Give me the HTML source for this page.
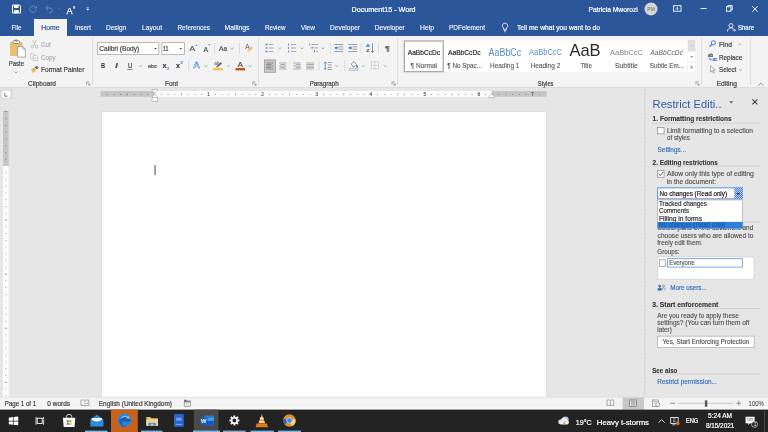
<!DOCTYPE html>
<html><head><meta charset="utf-8"><title>Document15 - Word</title>
<style>
html,body{margin:0;padding:0;}
body{width:768px;height:432px;overflow:hidden;background:#e6e6e6;}
svg#app{position:absolute;left:0;top:0;display:block;will-change:transform;}
svg text{font-family:"Liberation Sans",sans-serif;white-space:pre;}
</style></head><body>
<svg id="app" width="768" height="432" viewBox="0 0 768 432">
<rect x="0.00" y="0.00" width="768.00" height="36.00" fill="#2b579a" />
<rect x="0.00" y="36.00" width="768.00" height="51.00" fill="#f3f3f3" />
<rect x="0.00" y="87.00" width="768.00" height="1.00" fill="#dcdcdc" />
<rect x="34.00" y="19.00" width="33.00" height="18.00" fill="#f3f3f3" />
<text x="351.50" y="11.80" font-size="6.70" fill="#fff" textLength="64.00" lengthAdjust="spacingAndGlyphs" stroke="#fff" stroke-width="0.2">Document15 - Word</text>
<text x="588.50" y="11.70" font-size="6.70" fill="#fff" textLength="49.30" lengthAdjust="spacingAndGlyphs" stroke="#fff" stroke-width="0.2">Patricia Mworozi</text>
<circle cx="651" cy="9" r="6.5" fill="#d6d6d6"/>
<text x="647.30" y="11.07" font-size="4.94" fill="#8a8a8a" textLength="7.50" lengthAdjust="spacingAndGlyphs" stroke="#8a8a8a" stroke-width="0.2">PM</text>
<svg x="12.00" y="4.50" width="9" height="9" viewBox="0 0 9 9" overflow="visible"><path d="M0.5 0.5h7l1 1v7h-8z" fill="none" stroke="#fff" stroke-width="1"/><rect x="2" y="0.5" width="4.5" height="3" fill="#fff"/><rect x="2.2" y="5.6" width="4.6" height="3" fill="#fff"/></svg>
<svg x="29.00" y="5.00" width="8" height="8" viewBox="0 0 8 8" overflow="visible"><path d="M6.8 2.6A3.2 3.2 0 1 0 7.2 4.6" fill="none" stroke="#6f8fc0" stroke-width="0.9"/><path d="M7.4 0.8v2.2h-2.2" fill="none" stroke="#6f8fc0" stroke-width="0.9"/></svg>
<svg x="45.00" y="5.00" width="9" height="8" viewBox="0 0 9 8" overflow="visible"><path d="M3 0.8L0.8 3l2.2 2.2M0.8 3h4.2a2.3 2.3 0 0 1 0 4.6h-1" fill="none" stroke="#6f8fc0" stroke-width="0.9"/></svg>
<svg x="57.50" y="8.00" width="3" height="2" viewBox="0 0 3 2" overflow="visible"><path d="M0.3 0.3L1.3 1.4L2.3 0.3" fill="none" stroke="#6f8fc0" stroke-width="0.6"/></svg>
<text x="66.50" y="13.67" font-size="9.40" fill="#fff" textLength="6.10" lengthAdjust="spacingAndGlyphs" stroke="#fff" stroke-width="0.25">A</text>
<text x="73.00" y="8.53" font-size="4.27" fill="#dfe7f3" textLength="2.30" lengthAdjust="spacingAndGlyphs" stroke="#dfe7f3" stroke-width="0.2">§</text>
<svg x="86.00" y="7.50" width="4" height="4" viewBox="0 0 4 4" overflow="visible"><path d="M0.4 0.4h2.6" stroke="#fff" stroke-width="0.7"/><path d="M0.3 1.6L1.7 3l1.4-1.4z" fill="#fff"/></svg>
<svg x="673.00" y="5.20" width="9" height="7" viewBox="0 0 9 7" overflow="visible"><rect x="0.5" y="0.5" width="7.5" height="5.5" fill="none" stroke="#fff" stroke-width="0.9"/><path d="M4.2 1.6v2.6M3 3.2l1.2 1.2l1.2-1.2" fill="none" stroke="#fff" stroke-width="0.8"/></svg>
<rect x="700.50" y="8.00" width="6.00" height="0.90" fill="#fff" />
<svg x="726.00" y="5.00" width="7" height="7" viewBox="0 0 7 7" overflow="visible"><rect x="0.5" y="1.8" width="4.4" height="4.4" fill="none" stroke="#fff" stroke-width="0.9"/><path d="M1.8 1.8V0.5h4.4v4.4H4.9" fill="none" stroke="#fff" stroke-width="0.9"/></svg>
<svg x="751.70" y="5.80" width="7" height="7" viewBox="0 0 7 7" overflow="visible"><path d="M0.4 0.4L6 6M6 0.4L0.4 6" stroke="#fff" stroke-width="0.95"/></svg>
<text x="11.50" y="30.24" font-size="7.10" fill="#fff" textLength="10.00" lengthAdjust="spacingAndGlyphs" stroke="#fff" stroke-width="0.1">File</text>
<text x="75.00" y="30.24" font-size="7.10" fill="#fff" textLength="16.00" lengthAdjust="spacingAndGlyphs" stroke="#fff" stroke-width="0.1">Insert</text>
<text x="106.00" y="30.24" font-size="7.10" fill="#fff" textLength="20.30" lengthAdjust="spacingAndGlyphs" stroke="#fff" stroke-width="0.1">Design</text>
<text x="142.00" y="30.24" font-size="7.10" fill="#fff" textLength="20.00" lengthAdjust="spacingAndGlyphs" stroke="#fff" stroke-width="0.1">Layout</text>
<text x="177.50" y="30.24" font-size="7.10" fill="#fff" textLength="32.50" lengthAdjust="spacingAndGlyphs" stroke="#fff" stroke-width="0.1">References</text>
<text x="224.50" y="30.24" font-size="7.10" fill="#fff" textLength="25.00" lengthAdjust="spacingAndGlyphs" stroke="#fff" stroke-width="0.1">Mailings</text>
<text x="265.00" y="30.24" font-size="7.10" fill="#fff" textLength="20.50" lengthAdjust="spacingAndGlyphs" stroke="#fff" stroke-width="0.1">Review</text>
<text x="301.00" y="30.24" font-size="7.10" fill="#fff" textLength="13.80" lengthAdjust="spacingAndGlyphs" stroke="#fff" stroke-width="0.1">View</text>
<text x="330.00" y="30.24" font-size="7.10" fill="#fff" textLength="30.00" lengthAdjust="spacingAndGlyphs" stroke="#fff" stroke-width="0.1">Developer</text>
<text x="374.80" y="30.24" font-size="7.10" fill="#fff" textLength="30.00" lengthAdjust="spacingAndGlyphs" stroke="#fff" stroke-width="0.1">Developer</text>
<text x="420.00" y="30.24" font-size="7.10" fill="#fff" textLength="14.00" lengthAdjust="spacingAndGlyphs" stroke="#fff" stroke-width="0.1">Help</text>
<text x="449.00" y="30.24" font-size="7.10" fill="#fff" textLength="36.00" lengthAdjust="spacingAndGlyphs" stroke="#fff" stroke-width="0.1">PDFelement</text>
<text x="41.20" y="30.24" font-size="7.10" fill="#2b579a" textLength="18.30" lengthAdjust="spacingAndGlyphs" stroke="#2b579a" stroke-width="0.2">Home</text>
<svg x="501.50" y="22.50" width="7" height="10" viewBox="0 0 7 10" overflow="visible"><path d="M3.5 0.6a2.7 2.7 0 0 0-1.5 4.9v1.3h3v-1.3A2.7 2.7 0 0 0 3.5 0.6z" fill="none" stroke="#fff" stroke-width="0.8"/><path d="M2.3 8h2.4M2.7 9.2h1.6" stroke="#fff" stroke-width="0.7"/></svg>
<text x="517.00" y="30.24" font-size="7.10" fill="#fff" textLength="83.00" lengthAdjust="spacingAndGlyphs" stroke="#fff" stroke-width="0.2">Tell me what you want to do</text>
<svg x="727.00" y="23.00" width="9" height="9" viewBox="0 0 9 9" overflow="visible"><circle cx="4" cy="2.6" r="2" fill="none" stroke="#fff" stroke-width="0.85"/><path d="M0.5 8.5c0-2.4 1.6-3.6 3.5-3.6c1.2 0 2.2 0.5 2.8 1.3" fill="none" stroke="#fff" stroke-width="0.85"/><path d="M5.4 7.2h3M7.3 5.9l1.3 1.3l-1.3 1.3" fill="none" stroke="#fff" stroke-width="0.7"/></svg>
<text x="738.00" y="30.24" font-size="7.10" fill="#fff" textLength="16.00" lengthAdjust="spacingAndGlyphs" stroke="#fff" stroke-width="0.2">Share</text>
<svg x="9.00" y="39.50" width="18" height="18" viewBox="0 0 18 18" overflow="visible"><rect x="1" y="2.5" width="12.5" height="14" rx="0.8" fill="#e8bf6c"/><rect x="4" y="1.2" width="6.5" height="2.8" rx="0.8" fill="#f3f3f3" stroke="#6a6a6a" stroke-width="0.7"/><circle cx="7.2" cy="1" r="0.9" fill="none" stroke="#6a6a6a" stroke-width="0.6"/><path d="M8.5 7h5.2l2.6 2.6v8H8.5z" fill="#fff" stroke="#8a8a8a" stroke-width="0.7"/><path d="M13.7 7v2.6h2.6" fill="none" stroke="#8a8a8a" stroke-width="0.6"/></svg>
<text x="8.80" y="65.88" font-size="6.65" fill="#444" textLength="15.20" lengthAdjust="spacingAndGlyphs" stroke="#444" stroke-width="0.2">Paste</text>
<svg x="14.40" y="71.40" width="3.2" height="1.8" viewBox="0 0 3.2 1.8" overflow="visible"><path d="M0.2 0.2L1.6 1.5L3 0.2" fill="none" stroke="#777" stroke-width="0.65"/></svg>
<svg x="30.50" y="39.70" width="8" height="9" viewBox="0 0 8 9" overflow="visible"><path d="M2 0.3L5.2 6M6 0.3L2.8 6" stroke="#b5b5b5" stroke-width="0.7" fill="none"/><circle cx="1.9" cy="7" r="1.3" fill="none" stroke="#b5b5b5" stroke-width="0.7"/><circle cx="6.1" cy="7" r="1.3" fill="none" stroke="#b5b5b5" stroke-width="0.7"/></svg>
<text x="41.00" y="46.88" font-size="6.65" fill="#b1b1b1" textLength="9.60" lengthAdjust="spacingAndGlyphs" stroke="#b1b1b1" stroke-width="0.2">Cut</text>
<svg x="30.00" y="53.00" width="9" height="8" viewBox="0 0 9 8" overflow="visible"><path d="M0.5 0.5h3l1.3 1.3v4h-4.3z" fill="#f6f6f6" stroke="#bdbdbd" stroke-width="0.7"/><path d="M3.2 2.2h3l1.5 1.5v3.8H3.2z" fill="#f6f6f6" stroke="#bdbdbd" stroke-width="0.7"/><path d="M4.2 4.6h2.4M4.2 5.9h2.4" stroke="#c6c6c6" stroke-width="0.5"/></svg>
<text x="41.00" y="59.88" font-size="6.65" fill="#b1b1b1" textLength="14.60" lengthAdjust="spacingAndGlyphs" stroke="#b1b1b1" stroke-width="0.2">Copy</text>
<svg x="30.50" y="65.80" width="9" height="8" viewBox="0 0 9 8" overflow="visible"><path d="M0.6 3.2L3.8 1.6L5.6 4.6L3 6.6L2.2 7.6L1.6 5.4z" fill="#e8b954"/><path d="M4.2 2L7.4 0.4M5 3L8 1.8M5.4 0.4L6.8 3" stroke="#444" stroke-width="0.8"/></svg>
<text x="41.00" y="72.38" font-size="6.65" fill="#444" textLength="43.40" lengthAdjust="spacingAndGlyphs" stroke="#444" stroke-width="0.2">Format Painter</text>
<text x="28.00" y="85.61" font-size="6.46" fill="#444" textLength="28.00" lengthAdjust="spacingAndGlyphs" stroke="#444" stroke-width="0.2">Clipboard</text>
<svg x="86.20" y="81.60" width="4" height="4" viewBox="0 0 4 4" overflow="visible"><path d="M0.3 3V0.3H3" fill="none" stroke="#777" stroke-width="0.6"/><path d="M1.5 1.5L3.5 3.5M3.6 2v1.6H2" fill="none" stroke="#777" stroke-width="0.6"/></svg>
<rect x="92.30" y="38.00" width="0.80" height="47.00" fill="#d8d8d8" />
<rect x="97.60" y="42.60" width="61.20" height="11.80" fill="#fff" stroke="#ababab" stroke-width="0.8" />
<text x="99.30" y="51.08" font-size="6.65" fill="#444" textLength="39.90" lengthAdjust="spacingAndGlyphs" stroke="#444" stroke-width="0.2">Calibri (Body)</text>
<svg x="154.10" y="47.90" width="3" height="2" viewBox="0 0 3 2" overflow="visible"><path d="M0.1 0.2L1.45 1.7L2.8 0.2z" fill="#444"/></svg>
<rect x="161.90" y="42.60" width="22.50" height="11.80" fill="#fff" stroke="#ababab" stroke-width="0.8" />
<text x="163.00" y="51.08" font-size="6.65" fill="#444" textLength="5.50" lengthAdjust="spacingAndGlyphs" stroke="#444" stroke-width="0.2">11</text>
<svg x="179.30" y="47.90" width="3" height="2" viewBox="0 0 3 2" overflow="visible"><path d="M0.1 0.2L1.45 1.7L2.8 0.2z" fill="#444"/></svg>
<text x="189.60" y="51.39" font-size="7.79" fill="#555" textLength="5.60" lengthAdjust="spacingAndGlyphs" stroke="#555" stroke-width="0.2">A</text>
<svg x="195.00" y="44.00" width="3" height="2" viewBox="0 0 3 2" overflow="visible"><path d="M0.2 1.8L1.4 0.3L2.6 1.8z" fill="#3b7fd0"/></svg>
<text x="203.60" y="51.54" font-size="6.27" fill="#555" textLength="4.60" lengthAdjust="spacingAndGlyphs" stroke="#555" stroke-width="0.2">A</text>
<svg x="208.00" y="44.00" width="3" height="2" viewBox="0 0 3 2" overflow="visible"><path d="M0.2 0.3L1.4 1.8L2.6 0.3z" fill="#3b7fd0"/></svg>
<rect x="214.00" y="43.00" width="0.80" height="10.50" fill="#d8d8d8" />
<text x="219.00" y="51.05" font-size="6.84" fill="#555" textLength="8.20" lengthAdjust="spacingAndGlyphs" stroke="#555" stroke-width="0.2">Aa</text>
<svg x="230.40" y="47.80" width="3.2" height="1.8" viewBox="0 0 3.2 1.8" overflow="visible"><path d="M0.2 0.2L1.6 1.5L3 0.2" fill="none" stroke="#777" stroke-width="0.65"/></svg>
<rect x="239.00" y="43.00" width="0.80" height="10.50" fill="#d8d8d8" />
<svg x="245.00" y="43.50" width="8" height="9" viewBox="0 0 8 9" overflow="visible"><text x="0.2" y="5.6" font-size="6.5" font-family="Liberation Sans, sans-serif" fill="#555">A</text><path d="M3 6.2L6.2 3L7.6 4.4L4.4 7.6z" fill="#f0c870" stroke="#d9a53c" stroke-width="0.4"/><path d="M2.6 7.4l1 1" stroke="#d9a53c" stroke-width="0.6"/></svg>
<text x="101.00" y="68.12" font-size="7.03" fill="#444" font-weight="bold" textLength="4.10" lengthAdjust="spacingAndGlyphs" stroke="#444" stroke-width="0.1">B</text>
<text x="115.30" y="68.15" font-size="6.84" fill="#444" font-weight="bold" font-style="italic" font-family="Liberation Serif, serif" textLength="2.50" lengthAdjust="spacingAndGlyphs" stroke="#444" stroke-width="0.2">I</text>
<text x="127.90" y="67.68" font-size="6.65" fill="#444" textLength="4.30" lengthAdjust="spacingAndGlyphs" stroke="#444" stroke-width="0.2">U</text>
<rect x="127.30" y="69.30" width="5.30" height="0.60" fill="#555" />
<svg x="138.90" y="65.10" width="3.2" height="1.8" viewBox="0 0 3.2 1.8" overflow="visible"><path d="M0.2 0.2L1.6 1.5L3 0.2" fill="none" stroke="#888" stroke-width="0.65"/></svg>
<text x="148.00" y="67.87" font-size="5.51" fill="#666" textLength="9.00" lengthAdjust="spacingAndGlyphs" stroke="#666" stroke-width="0.2">abc</text>
<rect x="147.60" y="65.80" width="9.80" height="0.50" fill="#666" />
<text x="162.60" y="68.22" font-size="7.03" fill="#444" font-weight="bold" textLength="4.00" lengthAdjust="spacingAndGlyphs" stroke="#444" stroke-width="0.2">x</text>
<text x="167.00" y="69.82" font-size="3.42" fill="#3b7fd0" textLength="2.00" lengthAdjust="spacingAndGlyphs" stroke="#3b7fd0" stroke-width="0.2">2</text>
<text x="176.00" y="68.22" font-size="7.03" fill="#444" font-weight="bold" textLength="4.00" lengthAdjust="spacingAndGlyphs" stroke="#444" stroke-width="0.2">x</text>
<text x="180.40" y="63.52" font-size="3.42" fill="#3b7fd0" textLength="2.20" lengthAdjust="spacingAndGlyphs" stroke="#3b7fd0" stroke-width="0.2">2</text>
<rect x="188.00" y="60.00" width="0.80" height="11.00" fill="#d8d8d8" />
<svg x="193.00" y="60.80" width="8" height="9" viewBox="0 0 8 9" overflow="visible"><text x="0.2" y="7.6" font-size="9.2" font-family="Liberation Sans, sans-serif" font-weight="bold" fill="#fff" stroke="#3b7fd0" stroke-width="0.55">A</text></svg>
<svg x="204.40" y="65.10" width="3.2" height="1.8" viewBox="0 0 3.2 1.8" overflow="visible"><path d="M0.2 0.2L1.6 1.5L3 0.2" fill="none" stroke="#888" stroke-width="0.65"/></svg>
<svg x="213.00" y="60.50" width="11" height="10" viewBox="0 0 11 10" overflow="visible"><text x="1.2" y="4.6" font-size="4.6" font-family="Liberation Sans, sans-serif" fill="#555">ab</text><path d="M3 6.4L7.6 1.6L9 3L4.4 7z" fill="#666"/><rect x="0" y="7.5" width="10" height="2.4" fill="#f3c44a"/></svg>
<svg x="226.80" y="65.10" width="3.2" height="1.8" viewBox="0 0 3.2 1.8" overflow="visible"><path d="M0.2 0.2L1.6 1.5L3 0.2" fill="none" stroke="#888" stroke-width="0.65"/></svg>
<text x="237.70" y="66.82" font-size="7.03" fill="#444" textLength="5.10" lengthAdjust="spacingAndGlyphs" stroke="#444" stroke-width="0.2">A</text>
<rect x="235.50" y="68.00" width="9.50" height="2.40" fill="#c8550e" />
<svg x="248.40" y="65.10" width="3.2" height="1.8" viewBox="0 0 3.2 1.8" overflow="visible"><path d="M0.2 0.2L1.6 1.5L3 0.2" fill="none" stroke="#888" stroke-width="0.65"/></svg>
<text x="165.00" y="85.61" font-size="6.46" fill="#444" textLength="13.00" lengthAdjust="spacingAndGlyphs" stroke="#444" stroke-width="0.2">Font</text>
<svg x="252.50" y="81.60" width="4" height="4" viewBox="0 0 4 4" overflow="visible"><path d="M0.3 3V0.3H3" fill="none" stroke="#777" stroke-width="0.6"/><path d="M1.5 1.5L3.5 3.5M3.6 2v1.6H2" fill="none" stroke="#777" stroke-width="0.6"/></svg>
<rect x="258.30" y="38.00" width="0.80" height="47.00" fill="#d8d8d8" />
<g><rect x="265.8" y="43.8" width="1.6" height="1.4" fill="#3b7fd0"/><rect x="268.8" y="44.15" width="4.6" height="0.7" fill="#8a8a8a"/><rect x="265.8" y="47.3" width="1.6" height="1.4" fill="#3b7fd0"/><rect x="268.8" y="47.65" width="4.6" height="0.7" fill="#8a8a8a"/><rect x="265.8" y="50.8" width="1.6" height="1.4" fill="#3b7fd0"/><rect x="268.8" y="51.15" width="4.6" height="0.7" fill="#8a8a8a"/></g>
<svg x="278.20" y="47.40" width="3.2" height="1.8" viewBox="0 0 3.2 1.8" overflow="visible"><path d="M0.2 0.2L1.6 1.5L3 0.2" fill="none" stroke="#888" stroke-width="0.65"/></svg>
<g><rect x="288" y="43.5" width="0.8" height="2" fill="#3b7fd0"/><rect x="291" y="44.15" width="5" height="0.7" fill="#8a8a8a"/><rect x="288" y="47" width="0.8" height="2" fill="#3b7fd0"/><rect x="291" y="47.65" width="5" height="0.7" fill="#8a8a8a"/><rect x="288" y="50.5" width="0.8" height="2" fill="#3b7fd0"/><rect x="291" y="51.15" width="5" height="0.7" fill="#8a8a8a"/></g>
<svg x="300.40" y="47.40" width="3.2" height="1.8" viewBox="0 0 3.2 1.8" overflow="visible"><path d="M0.2 0.2L1.6 1.5L3 0.2" fill="none" stroke="#888" stroke-width="0.65"/></svg>
<g><rect x="309.3" y="43.6" width="0.8" height="1.8" fill="#3b7fd0"/><rect x="311.5" y="44.1" width="6.5" height="0.7" fill="#8a8a8a"/><rect x="311.5" y="47" width="1.4" height="1.6" fill="#3b7fd0"/><rect x="314" y="47.6" width="4" height="0.7" fill="#8a8a8a"/><rect x="314" y="50" width="0.8" height="2.4" fill="#3b7fd0"/><rect x="316" y="51.2" width="2" height="0.7" fill="#8a8a8a"/></g>
<svg x="321.40" y="47.40" width="3.2" height="1.8" viewBox="0 0 3.2 1.8" overflow="visible"><path d="M0.2 0.2L1.6 1.5L3 0.2" fill="none" stroke="#888" stroke-width="0.65"/></svg>
<rect x="329.90" y="43.00" width="0.80" height="10.50" fill="#d8d8d8" />
<g><rect x="334.3" y="44" width="9" height="0.7" fill="#777"/><rect x="334.3" y="51" width="9" height="0.7" fill="#777"/><rect x="338.7" y="46" width="4.6" height="0.6" fill="#999"/><rect x="338.7" y="47.7" width="4.6" height="0.6" fill="#999"/><rect x="338.7" y="49.4" width="4.6" height="0.6" fill="#999"/><path d="M334.5 47.9l2-1.8v1.2h1.8v1.2h-1.8v1.2z" fill="#2f7bd6"/></g>
<g><rect x="348.2" y="44" width="9" height="0.7" fill="#777"/><rect x="348.2" y="51" width="9" height="0.7" fill="#777"/><rect x="352.6" y="46" width="4.6" height="0.6" fill="#999"/><rect x="352.6" y="47.7" width="4.6" height="0.6" fill="#999"/><rect x="352.6" y="49.4" width="4.6" height="0.6" fill="#999"/><path d="M352.2 47.9l-2-1.8v1.2h-1.8v1.2h1.8v1.2z" fill="#2f7bd6"/></g>
<rect x="360.60" y="43.00" width="0.80" height="10.50" fill="#d8d8d8" />
<text x="366.00" y="47.20" font-size="4.18" fill="#3b7fd0" textLength="3.80" lengthAdjust="spacingAndGlyphs" stroke="#3b7fd0" stroke-width="0.2">A</text>
<text x="366.20" y="52.30" font-size="4.18" fill="#555" textLength="3.40" lengthAdjust="spacingAndGlyphs" stroke="#555" stroke-width="0.2">Z</text>
<svg x="370.80" y="43.50" width="4" height="10" viewBox="0 0 4 10" overflow="visible"><path d="M1.7 0v8.8M0.2 7.2L1.7 9.2L3.2 7.2" fill="none" stroke="#666" stroke-width="0.7"/></svg>
<rect x="378.00" y="43.00" width="0.80" height="10.50" fill="#d8d8d8" />
<text x="385.00" y="51.25" font-size="7.41" fill="#555" textLength="5.00" lengthAdjust="spacingAndGlyphs" stroke="#555" stroke-width="0.2">¶</text>
<rect x="264.40" y="59.90" width="11.00" height="12.40" fill="#c9c9c9" stroke="#9a9a9a" stroke-width="0.8" />
<g><rect x="266.2" y="62.7" width="7.4" height="0.6" fill="#666"/><rect x="266.2" y="64.2" width="5" height="0.6" fill="#666"/><rect x="266.2" y="65.7" width="7.4" height="0.6" fill="#666"/><rect x="266.2" y="67.2" width="5" height="0.6" fill="#666"/><rect x="266.2" y="68.7" width="7.4" height="0.6" fill="#666"/></g>
<g><rect x="279" y="62.7" width="7.6" height="0.6" fill="#808080"/><rect x="280.3" y="64.2" width="5" height="0.6" fill="#808080"/><rect x="279" y="65.7" width="7.6" height="0.6" fill="#808080"/><rect x="280.3" y="67.2" width="5" height="0.6" fill="#808080"/><rect x="279" y="68.7" width="7.6" height="0.6" fill="#808080"/></g>
<g><rect x="293" y="62.7" width="7.6" height="0.6" fill="#808080"/><rect x="295.6" y="64.2" width="5" height="0.6" fill="#808080"/><rect x="293" y="65.7" width="7.6" height="0.6" fill="#808080"/><rect x="295.6" y="67.2" width="5" height="0.6" fill="#808080"/><rect x="293" y="68.7" width="7.6" height="0.6" fill="#808080"/></g>
<g><rect x="306.2" y="62.7" width="7.8" height="0.6" fill="#808080"/><rect x="306.2" y="64.2" width="7.8" height="0.6" fill="#808080"/><rect x="306.2" y="65.7" width="7.8" height="0.6" fill="#808080"/><rect x="306.2" y="67.2" width="7.8" height="0.6" fill="#808080"/><rect x="306.2" y="68.7" width="7.8" height="0.6" fill="#808080"/></g>
<rect x="318.60" y="60.00" width="0.80" height="11.00" fill="#d8d8d8" />
<g><path d="M325.3 62v7.4M324 63.4l1.3-1.6l1.3 1.6M324 68l1.3 1.6l1.3-1.6" fill="none" stroke="#2f7bd6" stroke-width="0.7"/><rect x="327.8" y="62.3" width="4" height="0.7" fill="#777"/><rect x="327.8" y="64.6" width="4" height="0.7" fill="#777"/><rect x="327.8" y="66.9" width="4" height="0.7" fill="#777"/><rect x="327.8" y="69.2" width="4" height="0.7" fill="#777"/></g>
<svg x="335.00" y="65.10" width="3.2" height="1.8" viewBox="0 0 3.2 1.8" overflow="visible"><path d="M0.2 0.2L1.6 1.5L3 0.2" fill="none" stroke="#888" stroke-width="0.65"/></svg>
<rect x="344.20" y="60.00" width="0.80" height="11.00" fill="#d8d8d8" />
<svg x="349.00" y="60.80" width="10" height="10" viewBox="0 0 10 10" overflow="visible"><path d="M2.2 3.2L5 0.8L7.6 4L4.6 6.4z" fill="#fff" stroke="#666" stroke-width="0.7"/><path d="M7.8 3.6c0.8 1 1.2 1.8 1.2 2.4a0.9 0.9 0 0 1-1.8 0c0-0.6 0.2-1.2 0.6-2.4z" fill="#2f7bd6"/><rect x="0.4" y="7.4" width="8.6" height="2" fill="#ececec" stroke="#9a9a9a" stroke-width="0.5"/></svg>
<svg x="361.80" y="65.10" width="3.2" height="1.8" viewBox="0 0 3.2 1.8" overflow="visible"><path d="M0.2 0.2L1.6 1.5L3 0.2" fill="none" stroke="#888" stroke-width="0.65"/></svg>
<svg x="371.00" y="61.50" width="8" height="8" viewBox="0 0 8 8" overflow="visible"><rect x="0.4" y="0.4" width="7" height="7" fill="#fafafa" stroke="#c4c4c4" stroke-width="0.7"/><path d="M3.9 0.4v7M0.4 3.9h7" stroke="#c4c4c4" stroke-width="0.7"/></svg>
<svg x="383.40" y="65.10" width="3.2" height="1.8" viewBox="0 0 3.2 1.8" overflow="visible"><path d="M0.2 0.2L1.6 1.5L3 0.2" fill="none" stroke="#888" stroke-width="0.65"/></svg>
<text x="309.70" y="85.61" font-size="6.46" fill="#444" textLength="29.00" lengthAdjust="spacingAndGlyphs" stroke="#444" stroke-width="0.2">Paragraph</text>
<svg x="391.70" y="81.60" width="4" height="4" viewBox="0 0 4 4" overflow="visible"><path d="M0.3 3V0.3H3" fill="none" stroke="#777" stroke-width="0.6"/><path d="M1.5 1.5L3.5 3.5M3.6 2v1.6H2" fill="none" stroke="#777" stroke-width="0.6"/></svg>
<rect x="397.00" y="38.00" width="0.80" height="47.00" fill="#d8d8d8" />
<rect x="403.70" y="40.40" width="283.60" height="31.90" fill="#fff" />
<rect x="404.30" y="41.00" width="38.90" height="30.70" fill="none" stroke="#a2a2a2" stroke-width="1.2" />
<text x="407.80" y="54.86" font-size="8.00" fill="#262626" textLength="32.20" lengthAdjust="spacingAndGlyphs" stroke="#262626" stroke-width="0.2">AaBbCcDc</text>
<text x="410.60" y="68.11" font-size="6.46" fill="#555" textLength="26.40" lengthAdjust="spacingAndGlyphs" stroke="#555" stroke-width="0.1">¶ Normal</text>
<text x="448.00" y="54.86" font-size="8.00" fill="#262626" textLength="32.60" lengthAdjust="spacingAndGlyphs" stroke="#262626" stroke-width="0.2">AaBbCcDc</text>
<text x="447.30" y="68.11" font-size="6.46" fill="#555" textLength="34.70" lengthAdjust="spacingAndGlyphs" stroke="#555" stroke-width="0.1">¶ No Spac...</text>
<text x="488.50" y="55.75" font-size="10.90" fill="#5a8ccb" textLength="32.80" lengthAdjust="spacingAndGlyphs">AaBbCc</text>
<text x="490.00" y="68.11" font-size="6.46" fill="#555" textLength="29.40" lengthAdjust="spacingAndGlyphs" stroke="#555" stroke-width="0.1">Heading 1</text>
<text x="529.00" y="54.85" font-size="8.80" fill="#5a8ccb" textLength="33.00" lengthAdjust="spacingAndGlyphs">AaBbCcC</text>
<text x="530.40" y="68.11" font-size="6.46" fill="#555" textLength="30.00" lengthAdjust="spacingAndGlyphs" stroke="#555" stroke-width="0.1">Heading 2</text>
<text x="569.40" y="55.77" font-size="16.40" fill="#2a2a2a" textLength="31.20" lengthAdjust="spacingAndGlyphs">AaB</text>
<text x="580.40" y="68.11" font-size="6.46" fill="#555" textLength="11.60" lengthAdjust="spacingAndGlyphs" stroke="#555" stroke-width="0.1">Title</text>
<text x="610.00" y="54.86" font-size="8.00" fill="#858585" textLength="32.80" lengthAdjust="spacingAndGlyphs">AaBbCcC</text>
<text x="615.00" y="68.11" font-size="6.46" fill="#555" textLength="22.80" lengthAdjust="spacingAndGlyphs" stroke="#555" stroke-width="0.1">Subtitle</text>
<text x="650.30" y="54.86" font-size="8.00" fill="#6a6a6a" font-style="italic" textLength="32.70" lengthAdjust="spacingAndGlyphs" stroke="#6a6a6a" stroke-width="0.05">AaBbCcDc</text>
<text x="649.80" y="68.11" font-size="6.46" fill="#555" textLength="34.20" lengthAdjust="spacingAndGlyphs" stroke="#555" stroke-width="0.1">Subtle Em...</text>
<rect x="688.00" y="39.80" width="7.20" height="11.40" fill="#dedede" />
<rect x="688.00" y="52.00" width="7.20" height="9.60" fill="#fff" />
<rect x="688.00" y="63.00" width="7.20" height="9.30" fill="#fff" />
<svg x="690.40" y="44.60" width="3" height="2" viewBox="0 0 3 2" overflow="visible"><path d="M0.2 1.6L1.4 0.4L2.6 1.6z" fill="#b8b8b8"/></svg>
<svg x="690.20" y="56.00" width="3" height="2" viewBox="0 0 3 2" overflow="visible"><path d="M0.1 0.3L1.5 1.8L2.9 0.3z" fill="#666"/></svg>
<svg x="690.20" y="65.80" width="3" height="4" viewBox="0 0 3 4" overflow="visible"><path d="M0.2 0.3h2.6" stroke="#666" stroke-width="0.5"/><path d="M0.1 1.4L1.5 2.9L2.9 1.4z" fill="#666"/></svg>
<text x="537.80" y="85.61" font-size="6.46" fill="#444" textLength="15.70" lengthAdjust="spacingAndGlyphs" stroke="#444" stroke-width="0.2">Styles</text>
<svg x="695.60" y="81.60" width="4" height="4" viewBox="0 0 4 4" overflow="visible"><path d="M0.3 3V0.3H3" fill="none" stroke="#777" stroke-width="0.6"/><path d="M1.5 1.5L3.5 3.5M3.6 2v1.6H2" fill="none" stroke="#777" stroke-width="0.6"/></svg>
<rect x="701.20" y="38.00" width="0.80" height="47.00" fill="#d8d8d8" />
<svg x="709.00" y="40.20" width="8" height="8" viewBox="0 0 8 8" overflow="visible"><circle cx="4.4" cy="2.6" r="2.1" fill="none" stroke="#2f6fc4" stroke-width="0.9"/><path d="M2.9 4.2L0.5 6.8" stroke="#2f6fc4" stroke-width="1.1"/></svg>
<text x="719.00" y="46.68" font-size="6.65" fill="#444" textLength="13.00" lengthAdjust="spacingAndGlyphs" stroke="#444" stroke-width="0.2">Find</text>
<svg x="738.20" y="43.40" width="3.2" height="1.8" viewBox="0 0 3.2 1.8" overflow="visible"><path d="M0.2 0.2L1.6 1.5L3 0.2" fill="none" stroke="#888" stroke-width="0.65"/></svg>
<svg x="708.00" y="52.30" width="10" height="9" viewBox="0 0 10 9" overflow="visible"><text x="0" y="4.3" font-size="5.4" fill="#444" stroke="#444" stroke-width="0.2" textLength="5.2" lengthAdjust="spacingAndGlyphs">ab</text><text x="4.4" y="8.5" font-size="5.4" fill="#2f6fc4" stroke="#2f6fc4" stroke-width="0.2" textLength="4.8" lengthAdjust="spacingAndGlyphs">ac</text><path d="M1.2 5.2v2h2.2M2.6 6.2l1 1l-1 1" fill="none" stroke="#2f6fc4" stroke-width="0.65"/></svg>
<text x="719.00" y="59.78" font-size="6.65" fill="#444" textLength="23.30" lengthAdjust="spacingAndGlyphs" stroke="#444" stroke-width="0.2">Replace</text>
<svg x="710.00" y="65.20" width="7" height="9" viewBox="0 0 7 9" overflow="visible"><path d="M0.6 0.5v6.4l1.7-1.5l1.1 2.5l1-0.5l-1.1-2.4h2.2z" fill="#fff" stroke="#777" stroke-width="0.6"/></svg>
<text x="719.00" y="72.48" font-size="6.65" fill="#444" textLength="17.30" lengthAdjust="spacingAndGlyphs" stroke="#444" stroke-width="0.2">Select</text>
<svg x="739.00" y="69.10" width="3.2" height="1.8" viewBox="0 0 3.2 1.8" overflow="visible"><path d="M0.2 0.2L1.6 1.5L3 0.2" fill="none" stroke="#888" stroke-width="0.65"/></svg>
<text x="716.60" y="85.61" font-size="6.46" fill="#444" textLength="20.40" lengthAdjust="spacingAndGlyphs" stroke="#444" stroke-width="0.2">Editing</text>
<rect x="750.00" y="38.00" width="0.80" height="47.00" fill="#d8d8d8" />
<svg x="758.00" y="82.60" width="6" height="3.4" viewBox="0 0 6 3.4" overflow="visible"><path d="M0.3 3L2.8 0.5L5.3 3" fill="none" stroke="#666" stroke-width="0.7"/></svg>
<rect x="0.00" y="88.00" width="768.00" height="309.40" fill="#e6e6e6" />
<rect x="0.00" y="88.70" width="12.70" height="10.60" fill="#dcdcdc" />
<rect x="2.10" y="90.80" width="8.10" height="7.00" fill="#fff" />
<g><path d="M4.8 93v3.2h2.6" fill="none" stroke="#555" stroke-width="0.8"/></g>
<rect x="100.40" y="91.00" width="54.20" height="5.80" fill="#c6c6c6" />
<rect x="154.60" y="91.00" width="337.00" height="5.80" fill="#fff" />
<rect x="491.60" y="91.00" width="55.00" height="5.80" fill="#c6c6c6" />
<g><rect x="147.34" y="93.95" width="0.9" height="0.9" fill="#707070"/><rect x="140.59" y="93.95" width="0.9" height="0.9" fill="#707070"/><rect x="133.83" y="93.95" width="0.9" height="0.9" fill="#707070"/><rect x="127.28" y="93" width="0.7" height="2.6" fill="#8a8a8a"/><rect x="120.32" y="93.95" width="0.9" height="0.9" fill="#707070"/><rect x="113.56" y="93.95" width="0.9" height="0.9" fill="#707070"/><rect x="106.81" y="93.95" width="0.9" height="0.9" fill="#707070"/><rect x="160.86" y="93.95" width="0.9" height="0.9" fill="#7a7a7a"/><rect x="167.61" y="93.95" width="0.9" height="0.9" fill="#7a7a7a"/><rect x="174.37" y="93.95" width="0.9" height="0.9" fill="#7a7a7a"/><rect x="181.33" y="93" width="0.7" height="2.6" fill="#9a9a9a"/><rect x="187.88" y="93.95" width="0.9" height="0.9" fill="#7a7a7a"/><rect x="194.64" y="93.95" width="0.9" height="0.9" fill="#7a7a7a"/><rect x="201.39" y="93.95" width="0.9" height="0.9" fill="#7a7a7a"/><rect x="214.91" y="93.95" width="0.9" height="0.9" fill="#7a7a7a"/><rect x="221.66" y="93.95" width="0.9" height="0.9" fill="#7a7a7a"/><rect x="228.42" y="93.95" width="0.9" height="0.9" fill="#7a7a7a"/><rect x="235.38" y="93" width="0.7" height="2.6" fill="#9a9a9a"/><rect x="241.93" y="93.95" width="0.9" height="0.9" fill="#7a7a7a"/><rect x="248.69" y="93.95" width="0.9" height="0.9" fill="#7a7a7a"/><rect x="255.44" y="93.95" width="0.9" height="0.9" fill="#7a7a7a"/><rect x="268.96" y="93.95" width="0.9" height="0.9" fill="#7a7a7a"/><rect x="275.71" y="93.95" width="0.9" height="0.9" fill="#7a7a7a"/><rect x="282.47" y="93.95" width="0.9" height="0.9" fill="#7a7a7a"/><rect x="289.43" y="93" width="0.7" height="2.6" fill="#9a9a9a"/><rect x="295.98" y="93.95" width="0.9" height="0.9" fill="#7a7a7a"/><rect x="302.74" y="93.95" width="0.9" height="0.9" fill="#7a7a7a"/><rect x="309.49" y="93.95" width="0.9" height="0.9" fill="#7a7a7a"/><rect x="323.01" y="93.95" width="0.9" height="0.9" fill="#7a7a7a"/><rect x="329.76" y="93.95" width="0.9" height="0.9" fill="#7a7a7a"/><rect x="336.52" y="93.95" width="0.9" height="0.9" fill="#7a7a7a"/><rect x="343.48" y="93" width="0.7" height="2.6" fill="#9a9a9a"/><rect x="350.03" y="93.95" width="0.9" height="0.9" fill="#7a7a7a"/><rect x="356.79" y="93.95" width="0.9" height="0.9" fill="#7a7a7a"/><rect x="363.54" y="93.95" width="0.9" height="0.9" fill="#7a7a7a"/><rect x="377.06" y="93.95" width="0.9" height="0.9" fill="#7a7a7a"/><rect x="383.81" y="93.95" width="0.9" height="0.9" fill="#7a7a7a"/><rect x="390.57" y="93.95" width="0.9" height="0.9" fill="#7a7a7a"/><rect x="397.52" y="93" width="0.7" height="2.6" fill="#9a9a9a"/><rect x="404.08" y="93.95" width="0.9" height="0.9" fill="#7a7a7a"/><rect x="410.84" y="93.95" width="0.9" height="0.9" fill="#7a7a7a"/><rect x="417.59" y="93.95" width="0.9" height="0.9" fill="#7a7a7a"/><rect x="431.11" y="93.95" width="0.9" height="0.9" fill="#7a7a7a"/><rect x="437.86" y="93.95" width="0.9" height="0.9" fill="#7a7a7a"/><rect x="444.62" y="93.95" width="0.9" height="0.9" fill="#7a7a7a"/><rect x="451.57" y="93" width="0.7" height="2.6" fill="#9a9a9a"/><rect x="458.13" y="93.95" width="0.9" height="0.9" fill="#7a7a7a"/><rect x="464.89" y="93.95" width="0.9" height="0.9" fill="#7a7a7a"/><rect x="471.64" y="93.95" width="0.9" height="0.9" fill="#7a7a7a"/><rect x="485.16" y="93.95" width="0.9" height="0.9" fill="#7a7a7a"/><rect x="491.91" y="93.95" width="0.9" height="0.9" fill="#7a7a7a"/><rect x="498.67" y="93.95" width="0.9" height="0.9" fill="#7a7a7a"/><rect x="505.62" y="93" width="0.7" height="2.6" fill="#9a9a9a"/><rect x="512.18" y="93.95" width="0.9" height="0.9" fill="#7a7a7a"/><rect x="518.94" y="93.95" width="0.9" height="0.9" fill="#7a7a7a"/><rect x="525.69" y="93.95" width="0.9" height="0.9" fill="#7a7a7a"/><rect x="539.21" y="93.95" width="0.9" height="0.9" fill="#7a7a7a"/></g>
<text x="207.30" y="96.17" font-size="5.50" fill="#555" textLength="2.60" lengthAdjust="spacingAndGlyphs" stroke="#555" stroke-width="0.2">1</text>
<text x="261.35" y="96.17" font-size="5.50" fill="#555" textLength="2.60" lengthAdjust="spacingAndGlyphs" stroke="#555" stroke-width="0.2">2</text>
<text x="315.40" y="96.17" font-size="5.50" fill="#555" textLength="2.60" lengthAdjust="spacingAndGlyphs" stroke="#555" stroke-width="0.2">3</text>
<text x="369.45" y="96.17" font-size="5.50" fill="#555" textLength="2.60" lengthAdjust="spacingAndGlyphs" stroke="#555" stroke-width="0.2">4</text>
<text x="423.50" y="96.17" font-size="5.50" fill="#555" textLength="2.60" lengthAdjust="spacingAndGlyphs" stroke="#555" stroke-width="0.2">5</text>
<text x="477.55" y="96.17" font-size="5.50" fill="#555" textLength="2.60" lengthAdjust="spacingAndGlyphs" stroke="#555" stroke-width="0.2">6</text>
<text x="531.30" y="96.17" font-size="5.50" fill="#555" textLength="2.60" lengthAdjust="spacingAndGlyphs" stroke="#555" stroke-width="0.2">7</text>
<g><path d="M152.1 89.4h5.4v0.8l-2.7 3.6l-2.7-3.6z" fill="#fff" stroke="#8a8a8a" stroke-width="0.5"/><path d="M154.8 94.2l2.7 2.6v4.7h-5.4v-4.7z" fill="#fff" stroke="#8a8a8a" stroke-width="0.5"/><path d="M152.1 97.5h5.4" stroke="#8a8a8a" stroke-width="0.5"/></g>
<g><path d="M491.6 93.8l2.6 2.6v1.4h-5.2v-1.4z" fill="#fff" stroke="#8a8a8a" stroke-width="0.5"/></g>
<rect x="3.00" y="111.00" width="5.70" height="55.00" fill="#c6c6c6" />
<rect x="3.00" y="166.00" width="5.70" height="231.40" fill="#fff" />
<g><rect x="5.4" y="158.79" width="0.9" height="0.9" fill="#707070"/><rect x="5.4" y="152.04" width="0.9" height="0.9" fill="#707070"/><rect x="5.4" y="145.28" width="0.9" height="0.9" fill="#707070"/><rect x="4.8" y="138.72" width="2" height="0.5" fill="#8a8a8a"/><rect x="5.4" y="131.77" width="0.9" height="0.9" fill="#707070"/><rect x="5.4" y="125.01" width="0.9" height="0.9" fill="#707070"/><rect x="5.4" y="118.26" width="0.9" height="0.9" fill="#707070"/><rect x="5.4" y="172.31" width="0.9" height="0.9" fill="#7a7a7a"/><rect x="5.4" y="179.06" width="0.9" height="0.9" fill="#7a7a7a"/><rect x="5.4" y="185.82" width="0.9" height="0.9" fill="#7a7a7a"/><rect x="4.8" y="192.78" width="2" height="0.5" fill="#9a9a9a"/><rect x="5.4" y="199.33" width="0.9" height="0.9" fill="#7a7a7a"/><rect x="5.4" y="206.09" width="0.9" height="0.9" fill="#7a7a7a"/><rect x="5.4" y="212.84" width="0.9" height="0.9" fill="#7a7a7a"/><rect x="4.6" y="219.70" width="2.6" height="0.7" fill="#777"/><rect x="5.4" y="226.36" width="0.9" height="0.9" fill="#7a7a7a"/><rect x="5.4" y="233.11" width="0.9" height="0.9" fill="#7a7a7a"/><rect x="5.4" y="239.87" width="0.9" height="0.9" fill="#7a7a7a"/><rect x="4.8" y="246.82" width="2" height="0.5" fill="#9a9a9a"/><rect x="5.4" y="253.38" width="0.9" height="0.9" fill="#7a7a7a"/><rect x="5.4" y="260.14" width="0.9" height="0.9" fill="#7a7a7a"/><rect x="5.4" y="266.89" width="0.9" height="0.9" fill="#7a7a7a"/><rect x="4.6" y="273.75" width="2.6" height="0.7" fill="#777"/><rect x="5.4" y="280.41" width="0.9" height="0.9" fill="#7a7a7a"/><rect x="5.4" y="287.16" width="0.9" height="0.9" fill="#7a7a7a"/><rect x="5.4" y="293.92" width="0.9" height="0.9" fill="#7a7a7a"/><rect x="4.8" y="300.88" width="2" height="0.5" fill="#9a9a9a"/><rect x="5.4" y="307.43" width="0.9" height="0.9" fill="#7a7a7a"/><rect x="5.4" y="314.19" width="0.9" height="0.9" fill="#7a7a7a"/><rect x="5.4" y="320.94" width="0.9" height="0.9" fill="#7a7a7a"/><rect x="4.6" y="327.80" width="2.6" height="0.7" fill="#777"/><rect x="5.4" y="334.46" width="0.9" height="0.9" fill="#7a7a7a"/><rect x="5.4" y="341.21" width="0.9" height="0.9" fill="#7a7a7a"/><rect x="5.4" y="347.97" width="0.9" height="0.9" fill="#7a7a7a"/><rect x="4.8" y="354.92" width="2" height="0.5" fill="#9a9a9a"/><rect x="5.4" y="361.48" width="0.9" height="0.9" fill="#7a7a7a"/><rect x="5.4" y="368.24" width="0.9" height="0.9" fill="#7a7a7a"/><rect x="5.4" y="374.99" width="0.9" height="0.9" fill="#7a7a7a"/><rect x="4.6" y="381.85" width="2.6" height="0.7" fill="#777"/><rect x="5.4" y="388.51" width="0.9" height="0.9" fill="#7a7a7a"/><rect x="5.4" y="395.26" width="0.9" height="0.9" fill="#7a7a7a"/><rect x="4.6" y="111.3" width="2.6" height="0.7" fill="#777"/></g>
<rect x="101.50" y="111.50" width="445.10" height="285.90" fill="#fff" />
<rect x="101.45" y="111.45" width="445.20" height="285.70" fill="none" stroke="#d0d0d0" stroke-width="0.5" />
<rect x="154.65" y="165.20" width="0.80" height="10.00" fill="#1e1e1e" />
<rect x="645.00" y="88.50" width="123.00" height="308.90" fill="#e6e6e6" />
<g><path d="M644.8 89V397" stroke="#b4b4b4" stroke-width="0.7" stroke-dasharray="1.2 1.2"/></g>
<text x="652.60" y="107.65" font-size="11.60" fill="#2f5da3" textLength="68.90" lengthAdjust="spacingAndGlyphs">Restrict Editi..</text>
<svg x="728.80" y="101.00" width="5" height="3" viewBox="0 0 5 3" overflow="visible"><path d="M0.2 0.3L2.4 2.6L4.6 0.3z" fill="#666"/></svg>
<svg x="752.00" y="98.90" width="6" height="6" viewBox="0 0 6 6" overflow="visible"><path d="M0.4 0.4L5.4 5.4M5.4 0.4L0.4 5.4" stroke="#444" stroke-width="1.15"/></svg>
<text x="652.60" y="121.41" font-size="6.74" fill="#333" font-weight="bold" textLength="79.10" lengthAdjust="spacingAndGlyphs" stroke="#333" stroke-width="0.1">1. Formatting restrictions</text>
<g><path d="M652 123.3H760" stroke="#cdcdcd" stroke-width="0.8"/></g>
<rect x="657.55" y="127.35" width="6.50" height="6.50" fill="#fff" stroke="#8a8a8a" stroke-width="0.7" />
<text x="666.90" y="132.64" font-size="6.27" fill="#505050" textLength="86.10" lengthAdjust="spacingAndGlyphs" stroke="#505050" stroke-width="0.12">Limit formatting to a selection</text>
<text x="666.90" y="140.04" font-size="6.27" fill="#505050" textLength="23.10" lengthAdjust="spacingAndGlyphs" stroke="#505050" stroke-width="0.12">of styles</text>
<text x="657.60" y="151.54" font-size="6.27" fill="#2b6bb8" textLength="28.40" lengthAdjust="spacingAndGlyphs" stroke="#2b6bb8" stroke-width="0.12">Settings...</text>
<text x="652.60" y="164.61" font-size="6.74" fill="#333" font-weight="bold" textLength="65.20" lengthAdjust="spacingAndGlyphs" stroke="#333" stroke-width="0.1">2. Editing restrictions</text>
<g><path d="M652 166H760" stroke="#cdcdcd" stroke-width="0.8"/></g>
<rect x="657.55" y="170.55" width="6.50" height="6.70" fill="#fff" stroke="#8a8a8a" stroke-width="0.7" />
<g><path d="M658.8 173.8l1.6 1.8l2.8-3.8" fill="none" stroke="#444" stroke-width="0.85"/></g>
<text x="666.90" y="176.14" font-size="6.27" fill="#505050" textLength="87.00" lengthAdjust="spacingAndGlyphs" stroke="#505050" stroke-width="0.12">Allow only this type of editing</text>
<text x="666.90" y="183.54" font-size="6.27" fill="#505050" textLength="49.10" lengthAdjust="spacingAndGlyphs" stroke="#505050" stroke-width="0.12">in the document:</text>
<g><path d="M657 222H760" stroke="#cdcdcd" stroke-width="0.8"/></g>
<text x="657.60" y="230.24" font-size="6.27" fill="#505050" textLength="95.70" lengthAdjust="spacingAndGlyphs" stroke="#505050" stroke-width="0.12">Select parts of the document and</text>
<text x="657.60" y="237.74" font-size="6.27" fill="#505050" textLength="95.90" lengthAdjust="spacingAndGlyphs" stroke="#505050" stroke-width="0.12">choose users who are allowed to</text>
<text x="657.30" y="244.74" font-size="6.27" fill="#505050" textLength="45.20" lengthAdjust="spacingAndGlyphs" stroke="#505050" stroke-width="0.12">freely edit them.</text>
<text x="657.30" y="253.74" font-size="6.27" fill="#505050" textLength="22.30" lengthAdjust="spacingAndGlyphs" stroke="#505050" stroke-width="0.12">Groups:</text>
<rect x="657.60" y="257.00" width="96.30" height="22.30" fill="#fff" stroke="#a8a8a8" stroke-width="0.6" stroke-dasharray="1 1"/>
<rect x="659.55" y="259.75" width="5.70" height="6.60" fill="#fff" stroke="#8a8a8a" stroke-width="0.7" />
<rect x="667.40" y="258.70" width="74.90" height="8.40" fill="#fff" stroke="#5b95d6" stroke-width="0.8" />
<text x="669.20" y="265.24" font-size="6.27" fill="#505050" textLength="25.40" lengthAdjust="spacingAndGlyphs" stroke="#505050" stroke-width="0.12">Everyone</text>
<svg x="657.30" y="284.60" width="9" height="6" viewBox="0 0 9 6" overflow="visible"><circle cx="2.4" cy="1.5" r="1.3" fill="#2f6fc4"/><path d="M0.2 5.8c0-2 1-2.8 2.2-2.8s2.2 0.8 2.2 2.8z" fill="#2f6fc4"/><circle cx="6.2" cy="1.5" r="1.1" fill="none" stroke="#555" stroke-width="0.5"/><path d="M4.9 5.6c0-1.6 0.6-2.4 1.4-2.4s1.7 0.8 1.7 2.4" fill="none" stroke="#555" stroke-width="0.5"/></svg>
<text x="670.20" y="289.74" font-size="6.27" fill="#2b6bb8" textLength="36.50" lengthAdjust="spacingAndGlyphs" stroke="#2b6bb8" stroke-width="0.12">More users...</text>
<text x="652.20" y="306.91" font-size="6.74" fill="#333" font-weight="bold" textLength="66.20" lengthAdjust="spacingAndGlyphs" stroke="#333" stroke-width="0.1">3. Start enforcement</text>
<g><path d="M652 308.6H760" stroke="#cdcdcd" stroke-width="0.8"/></g>
<text x="657.30" y="317.64" font-size="6.27" fill="#505050" textLength="81.40" lengthAdjust="spacingAndGlyphs" stroke="#505050" stroke-width="0.12">Are you ready to apply these</text>
<text x="657.30" y="324.84" font-size="6.27" fill="#505050" textLength="92.10" lengthAdjust="spacingAndGlyphs" stroke="#505050" stroke-width="0.12">settings? (You can turn them off</text>
<text x="657.30" y="332.24" font-size="6.27" fill="#505050" textLength="14.50" lengthAdjust="spacingAndGlyphs" stroke="#505050" stroke-width="0.12">later)</text>
<rect x="657.35" y="336.15" width="96.80" height="11.50" fill="#fdfdfd" stroke="#ababab" stroke-width="0.7" />
<text x="662.40" y="344.44" font-size="6.27" fill="#505050" textLength="87.00" lengthAdjust="spacingAndGlyphs" stroke="#505050" stroke-width="0.12">Yes, Start Enforcing Protection</text>
<text x="652.20" y="372.61" font-size="6.74" fill="#333" font-weight="bold" textLength="25.20" lengthAdjust="spacingAndGlyphs" stroke="#333" stroke-width="0.1">See also</text>
<g><path d="M652 374H760" stroke="#cdcdcd" stroke-width="0.8"/></g>
<text x="657.30" y="383.84" font-size="6.27" fill="#2b6bb8" textLength="59.50" lengthAdjust="spacingAndGlyphs" stroke="#2b6bb8" stroke-width="0.12">Restrict permission...</text>
<rect x="657.65" y="187.85" width="84.70" height="11.00" fill="#fff" stroke="#4a86d2" stroke-width="0.9" />
<text x="659.40" y="195.94" font-size="6.27" fill="#222" textLength="67.60" lengthAdjust="spacingAndGlyphs" stroke="#222" stroke-width="0.2">No changes (Read only)</text>
<defs><pattern id="dth" width="2" height="2" patternUnits="userSpaceOnUse"><rect width="2" height="2" fill="#3f7ad2"/><rect width="1" height="1" fill="#c4d8f4"/><rect x="1" y="1" width="1" height="1" fill="#c4d8f4"/></pattern></defs>
<rect x="734.30" y="187.40" width="8.50" height="11.90" fill="url(#dth)" />
<svg x="736.20" y="192.60" width="4" height="3" viewBox="0 0 4 3" overflow="visible"><path d="M0.2 0.3L2 2.4L3.8 0.3z" fill="#1d3f78"/></svg>
<rect x="657.55" y="199.95" width="85.10" height="28.50" fill="#fff" stroke="#a4a4a4" stroke-width="0.7" />
<text x="659.00" y="206.14" font-size="6.27" fill="#333" textLength="48.00" lengthAdjust="spacingAndGlyphs" stroke="#333" stroke-width="0.2">Tracked changes</text>
<text x="659.00" y="213.24" font-size="6.27" fill="#333" textLength="30.00" lengthAdjust="spacingAndGlyphs" stroke="#333" stroke-width="0.2">Comments</text>
<text x="659.00" y="220.54" font-size="6.27" fill="#333" textLength="43.00" lengthAdjust="spacingAndGlyphs" stroke="#333" stroke-width="0.2">Filling in forms</text>
<rect x="657.60" y="221.90" width="85.10" height="6.60" fill="#2f80dc" />
<text x="659.00" y="227.41" font-size="6.46" fill="#2257a8" textLength="66.00" lengthAdjust="spacingAndGlyphs" stroke="#2257a8" stroke-width="0.2">No changes (Read only)</text>
<rect x="0.00" y="396.90" width="768.00" height="0.70" fill="#dadada" />
<rect x="0.00" y="397.60" width="768.00" height="12.00" fill="#f3f3f3" />
<rect x="0.00" y="407.40" width="768.00" height="2.20" fill="#fafafa" />
<text x="4.80" y="406.01" font-size="6.46" fill="#444" textLength="31.40" lengthAdjust="spacingAndGlyphs" stroke="#444" stroke-width="0.2">Page 1 of 1</text>
<text x="47.30" y="406.01" font-size="6.46" fill="#444" textLength="22.70" lengthAdjust="spacingAndGlyphs" stroke="#444" stroke-width="0.2">0 words</text>
<svg x="80.60" y="399.50" width="9" height="7" viewBox="0 0 9 7" overflow="visible"><path d="M0.4 0.6h3.2l0.7 0.6l0.7-0.6h3.2v5.4h-3.2l-0.7 0.6l-0.7-0.6h-3.2z" fill="#fafafa" stroke="#777" stroke-width="0.6"/><path d="M4.3 1.2v5" stroke="#777" stroke-width="0.5"/><path d="M5.4 3.4l0.9 1l1.6-2" fill="none" stroke="#777" stroke-width="0.6"/></svg>
<text x="98.80" y="406.31" font-size="6.46" fill="#444" textLength="73.10" lengthAdjust="spacingAndGlyphs" stroke="#444" stroke-width="0.2">English (United Kingdom)</text>
<svg x="183.80" y="399.50" width="7" height="7.4" viewBox="0 0 7 7.4" overflow="visible"><rect x="0.4" y="1.4" width="6.2" height="5.4" fill="#fafafa" stroke="#777" stroke-width="0.6"/><rect x="0.4" y="1.4" width="6.2" height="1.6" fill="#888"/><circle cx="1.6" cy="1" r="1" fill="#555"/><path d="M1.6 4.4h1.4M1.6 5.6h1.4M4 4.4h1.4M4 5.6h1.4" stroke="#888" stroke-width="0.5"/></svg>
<svg x="606.70" y="399.40" width="8" height="7" viewBox="0 0 8 7" overflow="visible"><path d="M0.4 0.8c1.2-0.5 2.2-0.5 3.3 0.3c1.1-0.8 2.1-0.8 3.3-0.3v5.4c-1.2-0.5-2.2-0.5-3.3 0.3c-1.1-0.8-2.1-0.8-3.3-0.3z" fill="#f7f7f7" stroke="#777" stroke-width="0.6"/><path d="M3.7 1.1v5.4" stroke="#777" stroke-width="0.6"/></svg>
<rect x="622.50" y="397.40" width="21.50" height="12.20" fill="#c8c8c8" />
<svg x="629.30" y="399.60" width="8" height="7.4" viewBox="0 0 8 7.4" overflow="visible"><rect x="0.4" y="0.4" width="7" height="6.6" fill="#e4e4e4" stroke="#666" stroke-width="0.6"/><path d="M1.6 1.8h4.8M1.6 3h4.8M1.6 4.2h4.8M1.6 5.4h4.8" stroke="#777" stroke-width="0.5"/></svg>
<svg x="652.00" y="399.60" width="8" height="7.4" viewBox="0 0 8 7.4" overflow="visible"><rect x="0.4" y="0.4" width="6" height="6.6" fill="#f7f7f7" stroke="#777" stroke-width="0.6"/><circle cx="5.6" cy="5" r="2" fill="#f7f7f7" stroke="#666" stroke-width="0.6"/><path d="M1.4 1.8h3.6M1.4 3.2h2" stroke="#888" stroke-width="0.5"/></svg>
<rect x="670.30" y="402.80" width="4.70" height="0.70" fill="#666" />
<rect x="677.90" y="402.90" width="55.40" height="0.50" fill="#9a9a9a" />
<rect x="704.90" y="400.40" width="2.40" height="6.30" fill="#555" />
<rect x="736.60" y="402.80" width="4.40" height="0.70" fill="#666" />
<rect x="738.45" y="400.90" width="0.70" height="4.50" fill="#666" />
<text x="748.60" y="405.91" font-size="6.46" fill="#555" textLength="15.30" lengthAdjust="spacingAndGlyphs" stroke="#555" stroke-width="0.1">100%</text>
<rect x="0.00" y="409.60" width="768.00" height="22.40" fill="#232323" />
<svg x="8.80" y="416.50" width="9.4" height="8.8" viewBox="0 0 9.4 8.8" overflow="visible"><path d="M0 1.2L4.1 0.6V4.2H0zM4.8 0.5L9.4 0V4.2H4.8zM0 4.9H4.1V8.3L0 7.7zM4.8 4.9H9.4V8.8L4.8 8.2z" fill="#fff"/></svg>
<svg x="35.60" y="416.80" width="9.6" height="8.2" viewBox="0 0 9.6 8.2" overflow="visible"><rect x="1.6" y="1.4" width="5" height="5.2" fill="none" stroke="#fff" stroke-width="0.9"/><path d="M0.4 0.2v7.8M8 0.2v2M8 3.6v4.4" stroke="#fff" stroke-width="0.8"/><rect x="7.6" y="2.6" width="1" height="1" fill="#fff"/></svg>
<svg x="62.50" y="414.20" width="13.2" height="13.2" viewBox="0 0 13.2 13.2" overflow="visible"><path d="M4 3.6V2.2a2.6 2 0 0 1 5.2 0v1.4" fill="none" stroke="#fff" stroke-width="0.8"/><path d="M0.4 3.6h12.4l-0.8 9.2h-10.8z" fill="#fff"/><rect x="4.2" y="6" width="2.1" height="2.1" fill="#f25022"/><rect x="6.8" y="6" width="2.1" height="2.1" fill="#7fba00"/><rect x="4.2" y="8.6" width="2.1" height="2.1" fill="#00a4ef"/><rect x="6.8" y="8.6" width="2.1" height="2.1" fill="#ffb900"/></svg>
<svg x="90.00" y="414.20" width="13.8" height="12.6" viewBox="0 0 13.8 12.6" overflow="visible"><path d="M0.4 5.2L6.9 0.6l6.5 4.6v7h-13z" fill="#2d8fe0"/><path d="M1.8 3.9h10.2v1.6q-5.1 3.4-10.2 0z" fill="#fff"/><path d="M0.4 12.2l5-4.2M13.4 12.2l-5-4.2" stroke="#1f6fc0" stroke-width="0.5"/></svg>
<rect x="85.00" y="430.60" width="22.50" height="1.40" fill="#76b9ed" />
<rect x="111.00" y="409.60" width="26.80" height="22.40" fill="#c4631c" />
<svg x="117.50" y="413.00" width="14" height="14.4" viewBox="0 0 14 14.4" overflow="visible"><circle cx="7" cy="7.2" r="6.8" fill="#2b86d9"/><path d="M2 9.5c-1-3.5 1.5-7.3 5.6-7.3c3 0 5.4 2 5.4 4.6c0 1.6-1.2 2.6-2.8 2.6c-1.4 0-2.2-0.6-2-1.4c-2.6-0.4-4 1.6-3 3.6c0.8 1.6 2.4 2.2 4 2.2c-3.2 1-6.2-1-7.2-4.3z" fill="#1b5fb4"/><path d="M2.4 6.4c0.8-2.6 3-4 5.4-4c2.6 0 4.8 1.6 5.2 4c-1-1.6-2.6-2.4-4.6-2.4c-2.6 0-4.8 1-6 2.4z" fill="#6fc6f0"/><circle cx="10.6" cy="4.4" r="1.6" fill="#9aa0a6"/></svg>
<svg x="146.00" y="416.00" width="12.2" height="10.2" viewBox="0 0 12.2 10.2" overflow="visible"><path d="M0.3 1h4l1 1.2h6.6v7.6h-11.6z" fill="#e6bd6e"/><rect x="0.3" y="3.4" width="11.6" height="6.4" fill="#efd49a"/><path d="M2.4 9.8v-3h7.4v3z" fill="#3a8fdc"/><rect x="4.6" y="7.8" width="3" height="2" fill="#e6bd6e"/></svg>
<rect x="141.00" y="430.60" width="21.50" height="1.40" fill="#76b9ed" />
<svg x="174.00" y="414.00" width="9.8" height="12.8" viewBox="0 0 9.8 12.8" overflow="visible"><rect x="0" y="0" width="9.8" height="12.8" rx="0.8" fill="#2a66c8"/><rect x="2" y="3.4" width="5.8" height="3.6" fill="#4b8ae6"/><path d="M2.8 5.2h4" stroke="#b8d4f8" stroke-width="0.7"/><path d="M1.6 10.4h6.6" stroke="#58b0f4" stroke-width="1"/></svg>
<rect x="193.80" y="409.60" width="24.70" height="22.40" fill="#4b4a49" />
<svg x="200.00" y="415.00" width="14.4" height="11.2" viewBox="0 0 14.4 11.2" overflow="visible"><rect x="4.4" y="0.4" width="9.6" height="10.4" rx="0.6" fill="#2b7cd3"/><rect x="4.4" y="5.6" width="9.6" height="5.2" fill="#185abd"/><rect x="4.4" y="3" width="9.6" height="2.6" fill="#41a5ee"/><rect x="0" y="2.4" width="7.6" height="7" rx="0.5" fill="#1a5dbe"/><text x="1.1" y="8" font-size="5.6" font-weight="bold" fill="#fff" textLength="5.4" lengthAdjust="spacingAndGlyphs">W</text></svg>
<rect x="193.00" y="430.60" width="27.00" height="1.40" fill="#76b9ed" />
<svg x="229.40" y="415.50" width="10" height="10" viewBox="0 0 10 10" overflow="visible"><g fill="#fff"><circle cx="5" cy="5" r="3.5"/><g id="gt"><rect x="4.1" y="0" width="1.8" height="10"/><rect x="0" y="4.1" width="10" height="1.8"/></g><g transform="rotate(45 5 5)"><rect x="4.1" y="0" width="1.8" height="10"/><rect x="0" y="4.1" width="10" height="1.8"/></g></g><circle cx="5" cy="5" r="1.9" fill="#232323"/></svg>
<rect x="223.00" y="430.60" width="22.60" height="1.40" fill="#8aa6cc" />
<svg x="255.60" y="413.60" width="12.4" height="13.8" viewBox="0 0 12.4 13.8" overflow="visible"><path d="M6.2 0.3l3.4 9.7h-6.8z" fill="#f08a1c"/><path d="M4.9 3.6h2.6l0.8 2.2h-4.2z" fill="#f4f4f4"/><path d="M3.6 7.4h5.2l0.5 1.5h-6.2z" fill="#f4f4f4"/><path d="M1 10h10.4l1 3.6h-12.4z" fill="#e27a12"/></svg>
<rect x="250.60" y="430.60" width="23.20" height="1.40" fill="#76b9ed" />
<svg x="283.00" y="414.00" width="12.8" height="13" viewBox="0 0 12.8 13" overflow="visible"><circle cx="6.4" cy="6.5" r="6.2" fill="#e0902e"/><path d="M6.4 6.5L12.4 5a6.2 6.2 0 0 1-3.6 7.3z" fill="#f6d27a"/><path d="M6.4 6.5l-4.6 4.2A6.2 6.2 0 0 1 0.4 4.8z" fill="#2a62b6"/><circle cx="6.4" cy="6.5" r="2.7" fill="#3a8be6" stroke="#dfe9f6" stroke-width="0.7"/></svg>
<rect x="278.00" y="430.60" width="23.00" height="1.40" fill="#76b9ed" />
<svg x="557.90" y="416.20" width="12.6" height="9.6" viewBox="0 0 12.6 9.6" overflow="visible"><circle cx="7.6" cy="3.4" r="3.2" fill="#a9c9ee"/><path d="M2.6 8.2a2.4 2.4 0 0 1 0.4-4.8a3.4 3.4 0 0 1 6.4 0.6a2.2 2.2 0 0 1 0.2 4.2z" fill="#e8eef6"/><path d="M5.8 5.4h1.8l-0.8 1.6h1l-2 2.6l0.5-1.9h-1z" fill="#f5a623"/></svg>
<text x="575.80" y="424.58" font-size="7.50" fill="#fff" textLength="16.00" lengthAdjust="spacingAndGlyphs" stroke="#fff" stroke-width="0.2">19°C</text>
<text x="596.80" y="424.58" font-size="7.50" fill="#fff" textLength="52.20" lengthAdjust="spacingAndGlyphs" stroke="#fff" stroke-width="0.2">Heavy t-storms</text>
<svg x="658.20" y="419.20" width="7" height="3.8" viewBox="0 0 7 3.8" overflow="visible"><path d="M0.3 3.5L3.4 0.4L6.5 3.5" fill="none" stroke="#fff" stroke-width="0.8"/></svg>
<svg x="670.30" y="416.40" width="9.4" height="9" viewBox="0 0 9.4 9" overflow="visible"><rect x="0.4" y="1" width="7.4" height="6" fill="none" stroke="#fff" stroke-width="0.8"/><path d="M2.8 2.4h2.6M2.8 4h1.6M2.8 5.4h2.6" stroke="#fff" stroke-width="0.6"/><path d="M2 8.4h3" stroke="#fff" stroke-width="0.7"/><circle cx="7.4" cy="7" r="1.8" fill="#e8701a"/></svg>
<text x="685.90" y="423.13" font-size="6.50" fill="#fff" textLength="12.40" lengthAdjust="spacingAndGlyphs" stroke="#fff" stroke-width="0.2">ENG</text>
<text x="708.00" y="418.03" font-size="6.50" fill="#fff" textLength="24.10" lengthAdjust="spacingAndGlyphs" stroke="#fff" stroke-width="0.2">5:24 AM</text>
<text x="705.90" y="427.93" font-size="6.50" fill="#fff" textLength="28.40" lengthAdjust="spacingAndGlyphs" stroke="#fff" stroke-width="0.2">8/15/2021</text>
<svg x="745.20" y="416.40" width="13" height="12" viewBox="0 0 13 12" overflow="visible"><path d="M0.4 0.4h9v6.4h-4.6l-1.8 1.8v-1.8h-2.6z" fill="#fff"/><path d="M1.8 2.2h6.2M1.8 3.8h6.2" stroke="#666" stroke-width="0.6"/><circle cx="9.4" cy="8" r="3" fill="#232323" stroke="#cfcfcf" stroke-width="0.8"/><text x="8.5" y="9.7" font-size="4.6" fill="#fff">1</text></svg>
<rect x="764.40" y="411.00" width="0.50" height="21.00" fill="#6a6a6a" />
</svg>
</body></html>
